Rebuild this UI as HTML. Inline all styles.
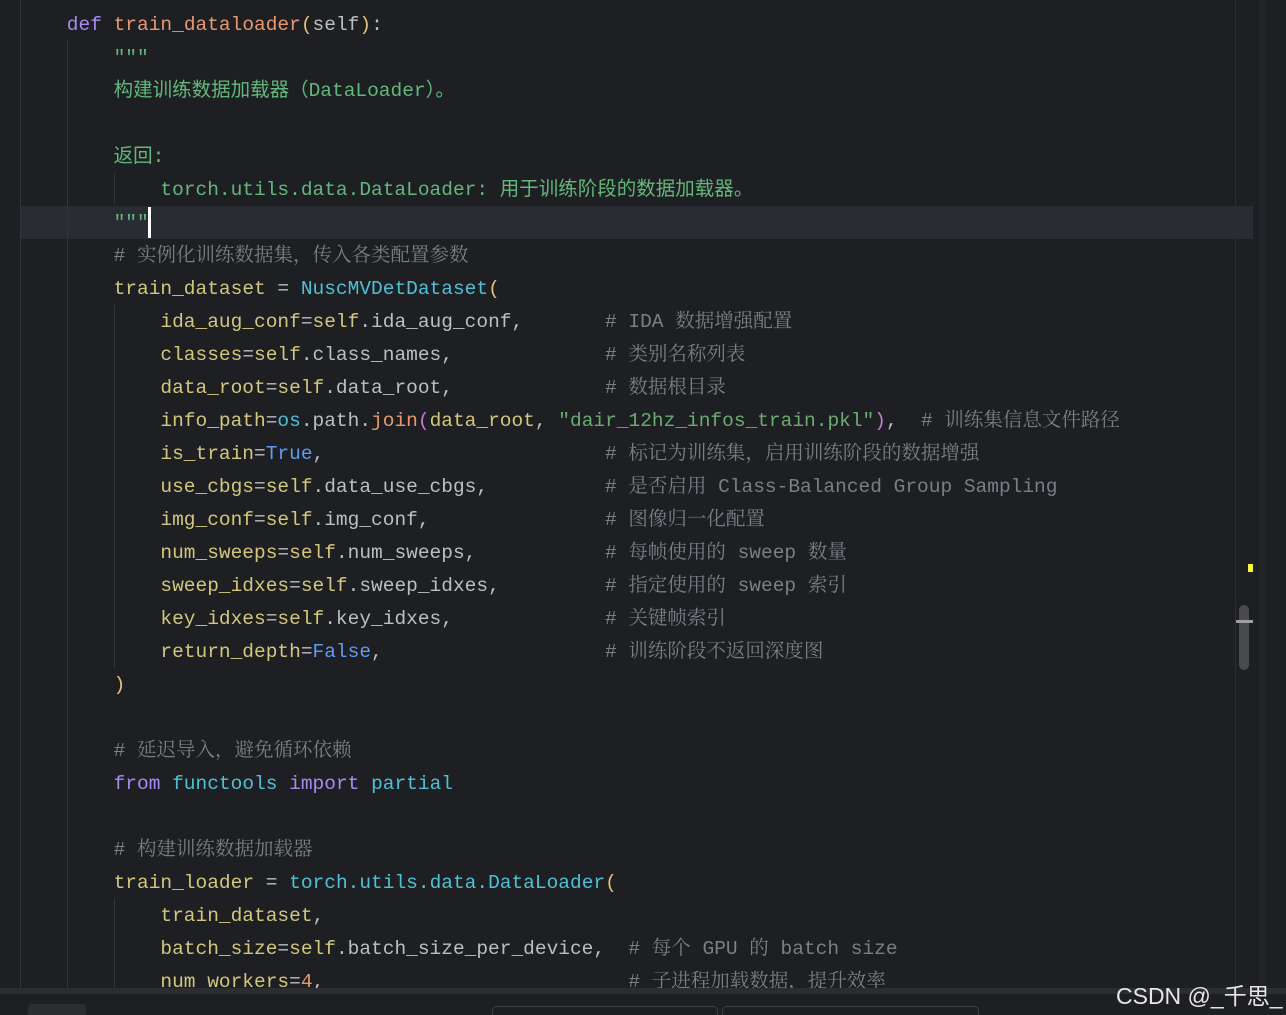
<!DOCTYPE html>
<html><head><meta charset="utf-8"><style>
html,body{margin:0;padding:0;background:#1e1f22;width:1286px;height:1015px;overflow:hidden;position:relative}
.l{position:absolute;height:33px;line-height:33px;white-space:pre;font-family:"Liberation Mono","Noto Sans CJK SC",monospace;font-size:19.5px;color:#bcbec4;margin-top:2px}
.c{color:#7a7e85;font-family:"Liberation Mono","Noto Serif CJK SC",monospace}
.k{color:#a98af0}.f{color:#e8996e}.y{color:#e5c07b}.g{color:#62b77a}.v{color:#d2c77c}.t{color:#4fc1d6}.b{color:#5f9cf0}.s{color:#6aab73}.p{color:#c678dd}.n{color:#e8996e}
.vl{position:absolute;width:1px;background:#313438}
</style></head><body>
<div style="position:absolute;left:20px;top:206px;width:1233px;height:33px;background:#2a2c33"></div>
<div class="vl" style="left:20px;top:0;height:988px"></div>
<div class="vl" style="left:67px;top:40px;height:948px"></div>
<div class="vl" style="left:114px;top:173px;height:32px"></div>
<div class="vl" style="left:114px;top:305px;height:363px"></div>
<div class="vl" style="left:114px;top:898px;height:90px"></div>
<div class="vl" style="left:1235px;top:0;height:988px;background:#2b2d30"></div>
<div style="position:absolute;left:1259px;top:0;width:6px;height:1015px;background:#232427"></div>
<div style="position:absolute;left:1239px;top:605px;width:10px;height:65px;border-radius:5px;background:#4a4b4e"></div>
<div style="position:absolute;left:1236px;top:620px;width:17px;height:3px;background:#a0a0a0"></div>
<div style="position:absolute;left:1248px;top:564px;width:5px;height:8px;background:#f5f542"></div>

<div class="l" style="left:66.8px;top:7px"><span class="k">def</span> <span class="f">train_dataloader</span><span class="y">(</span>self<span class="y">)</span>:</div>
<div class="l g" style="left:113.6px;top:40px">"""</div>
<div class="l g" style="left:113.6px;top:73px">构建训练数据加载器（DataLoader）。</div>
<div class="l g" style="left:113.6px;top:139px">返回:</div>
<div class="l g" style="left:160.4px;top:172px">torch.utils.data.DataLoader: 用于训练阶段的数据加载器。</div>
<div class="l g" style="left:113.6px;top:205px">"""</div>
<div style="position:absolute;left:148px;top:207px;width:3px;height:31px;background:#fff"></div>
<div class="l c" style="left:113.6px;top:238px"># 实例化训练数据集，传入各类配置参数</div>
<div class="l" style="left:113.6px;top:271px"><span class="v">train_dataset</span> = <span class="t">NuscMVDetDataset</span><span class="y">(</span></div>
<div class="l" style="left:160.4px;top:304px"><span class="v">ida_aug_conf</span>=<span class="v">self</span>.ida_aug_conf,</div>
<div class="l" style="left:160.4px;top:337px"><span class="v">classes</span>=<span class="v">self</span>.class_names,</div>
<div class="l" style="left:160.4px;top:370px"><span class="v">data_root</span>=<span class="v">self</span>.data_root,</div>
<div class="l" style="left:160.4px;top:403px"><span class="v">info_path</span>=<span class="t">os</span>.path.<span class="f">join</span><span class="p">(</span><span class="v">data_root</span>, <span class="s">"dair_12hz_infos_train.pkl"</span><span class="p">)</span>,</div>
<div class="l" style="left:160.4px;top:436px"><span class="v">is_train</span>=<span class="b">True</span>,</div>
<div class="l" style="left:160.4px;top:469px"><span class="v">use_cbgs</span>=<span class="v">self</span>.data_use_cbgs,</div>
<div class="l" style="left:160.4px;top:502px"><span class="v">img_conf</span>=<span class="v">self</span>.img_conf,</div>
<div class="l" style="left:160.4px;top:535px"><span class="v">num_sweeps</span>=<span class="v">self</span>.num_sweeps,</div>
<div class="l" style="left:160.4px;top:568px"><span class="v">sweep_idxes</span>=<span class="v">self</span>.sweep_idxes,</div>
<div class="l" style="left:160.4px;top:601px"><span class="v">key_idxes</span>=<span class="v">self</span>.key_idxes,</div>
<div class="l" style="left:160.4px;top:634px"><span class="v">return_depth</span>=<span class="b">False</span>,</div>
<div class="l c" style="left:605px;top:304px"># IDA 数据增强配置</div>
<div class="l c" style="left:605px;top:337px"># 类别名称列表</div>
<div class="l c" style="left:605px;top:370px"># 数据根目录</div>
<div class="l c" style="left:921px;top:403px"># 训练集信息文件路径</div>
<div class="l c" style="left:605px;top:436px"># 标记为训练集，启用训练阶段的数据增强</div>
<div class="l c" style="left:605px;top:469px"># 是否启用 Class-Balanced Group Sampling</div>
<div class="l c" style="left:605px;top:502px"># 图像归一化配置</div>
<div class="l c" style="left:605px;top:535px"># 每帧使用的 sweep 数量</div>
<div class="l c" style="left:605px;top:568px"># 指定使用的 sweep 索引</div>
<div class="l c" style="left:605px;top:601px"># 关键帧索引</div>
<div class="l c" style="left:605px;top:634px"># 训练阶段不返回深度图</div>
<div class="l y" style="left:113.6px;top:667px">)</div>
<div class="l c" style="left:113.6px;top:733px"># 延迟导入，避免循环依赖</div>
<div class="l" style="left:113.6px;top:766px"><span class="k">from</span> <span class="t">functools</span> <span class="k">import</span> <span class="t">partial</span></div>
<div class="l c" style="left:113.6px;top:832px"># 构建训练数据加载器</div>
<div class="l" style="left:113.6px;top:865px"><span class="v">train_loader</span> = <span class="t">torch.utils.data.DataLoader</span><span class="y">(</span></div>
<div class="l" style="left:160.4px;top:898px"><span class="v">train_dataset</span>,</div>
<div class="l" style="left:160.4px;top:931px"><span class="v">batch_size</span>=<span class="v">self</span>.batch_size_per_device,</div>
<div class="l" style="left:160.4px;top:964px"><span class="v">num_workers</span>=<span class="n">4</span>,</div>
<div class="l c" style="left:628.4px;top:931px"># 每个 GPU 的 batch size</div>
<div class="l c" style="left:628.4px;top:964px"># 子进程加载数据，提升效率</div>

<div style="position:absolute;left:0;top:988px;width:1286px;height:27px;background:#1e1f22;border-top:6px solid #2b2d30;box-sizing:border-box"></div>
<div style="position:absolute;left:28px;top:1004px;width:58px;height:11px;background:#2b2d30;border-radius:3px 3px 0 0"></div>
<div style="position:absolute;left:492px;top:1006px;width:224px;height:12px;border:1px solid #3c3f44;border-radius:5px"></div>
<div style="position:absolute;left:722px;top:1006px;width:255px;height:12px;border:1px solid #3c3f44;border-radius:5px"></div>
<div style="position:absolute;left:1116px;top:977px;font-family:'Liberation Sans','Noto Sans CJK SC',sans-serif;font-size:23px;color:#e6e6e6;white-space:nowrap">CSDN @_千思_</div>
</body></html>
